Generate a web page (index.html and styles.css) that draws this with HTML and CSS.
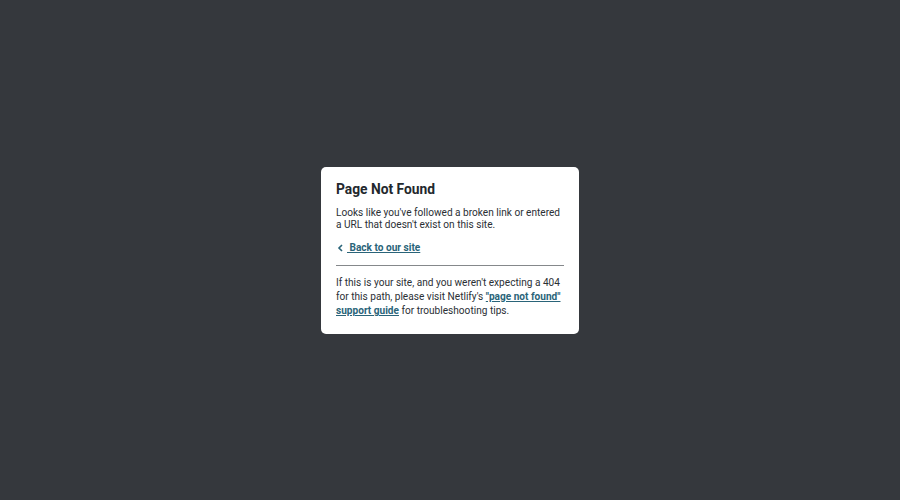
FILE: index.html
```html
<!DOCTYPE html>
<html>
<head>
<meta charset="utf-8">
<link rel="stylesheet" href="styles.css">
</head>
<body>
<div class="container">
  <div class="card">
    <h1 class="title">Page Not Found</h1>
    <p class="text">Looks like you've followed a broken link or entered a URL that doesn't exist on this site.</p>
    <a class="back" href="#"><svg class="chev" width="7" height="8" viewBox="0 0 7 8"><path d="M5 1 L2 4 L5 7" fill="none" stroke="#2a6479" stroke-width="1.6"/></svg><span class="u">&nbsp;Back to our site</span></a>
    <hr class="divider">
    <p class="text note">If this is your site, and you weren't expecting a 404 for this path, please visit Netlify's <a class="link" href="#">"page not found" support guide</a> for troubleshooting tips.</p>
  </div>
</div>
</body>
</html>
```
FILE: styles.css
```css
html, body { margin: 0; padding: 0; height: 100%; }
body {
  background: #35383d;
  font-family: Roboto, "Liberation Sans", sans-serif;
  color: #2a2e33;
}
.container {
  height: 100%;
  display: flex;
  align-items: center;
  justify-content: center;
}
.card {
  background: #fff;
  border-radius: 5px;
  width: 228px;
  padding: 13px 15px 16px;
  margin-top: 1px;
}
.title {
  font-size: 13.8px;
  font-weight: 700;
  margin: 0 0 9px;
  line-height: 18px;
  color: #23282d;
}
.text {
  font-size: 10.1px;
  line-height: 12px;
  margin: 0;
  color: #2b3035;
}
.back {
  display: inline-flex;
  align-items: center;
  margin-top: 10px;
  margin-left: 1px;
  font-size: 10.1px;
  font-weight: 700;
  color: #2a6479;
  text-decoration: none;
  line-height: 14px;
}
.chev { margin-right: 3px; }
.u { text-decoration: underline; }
.divider {
  border: 0;
  border-top: 1.5px solid #85888b;
  margin: 9px 0 10px;
}
.note { line-height: 14px; }
.link {
  color: #2a6479;
  font-weight: 700;
  text-decoration: underline;
}
```
